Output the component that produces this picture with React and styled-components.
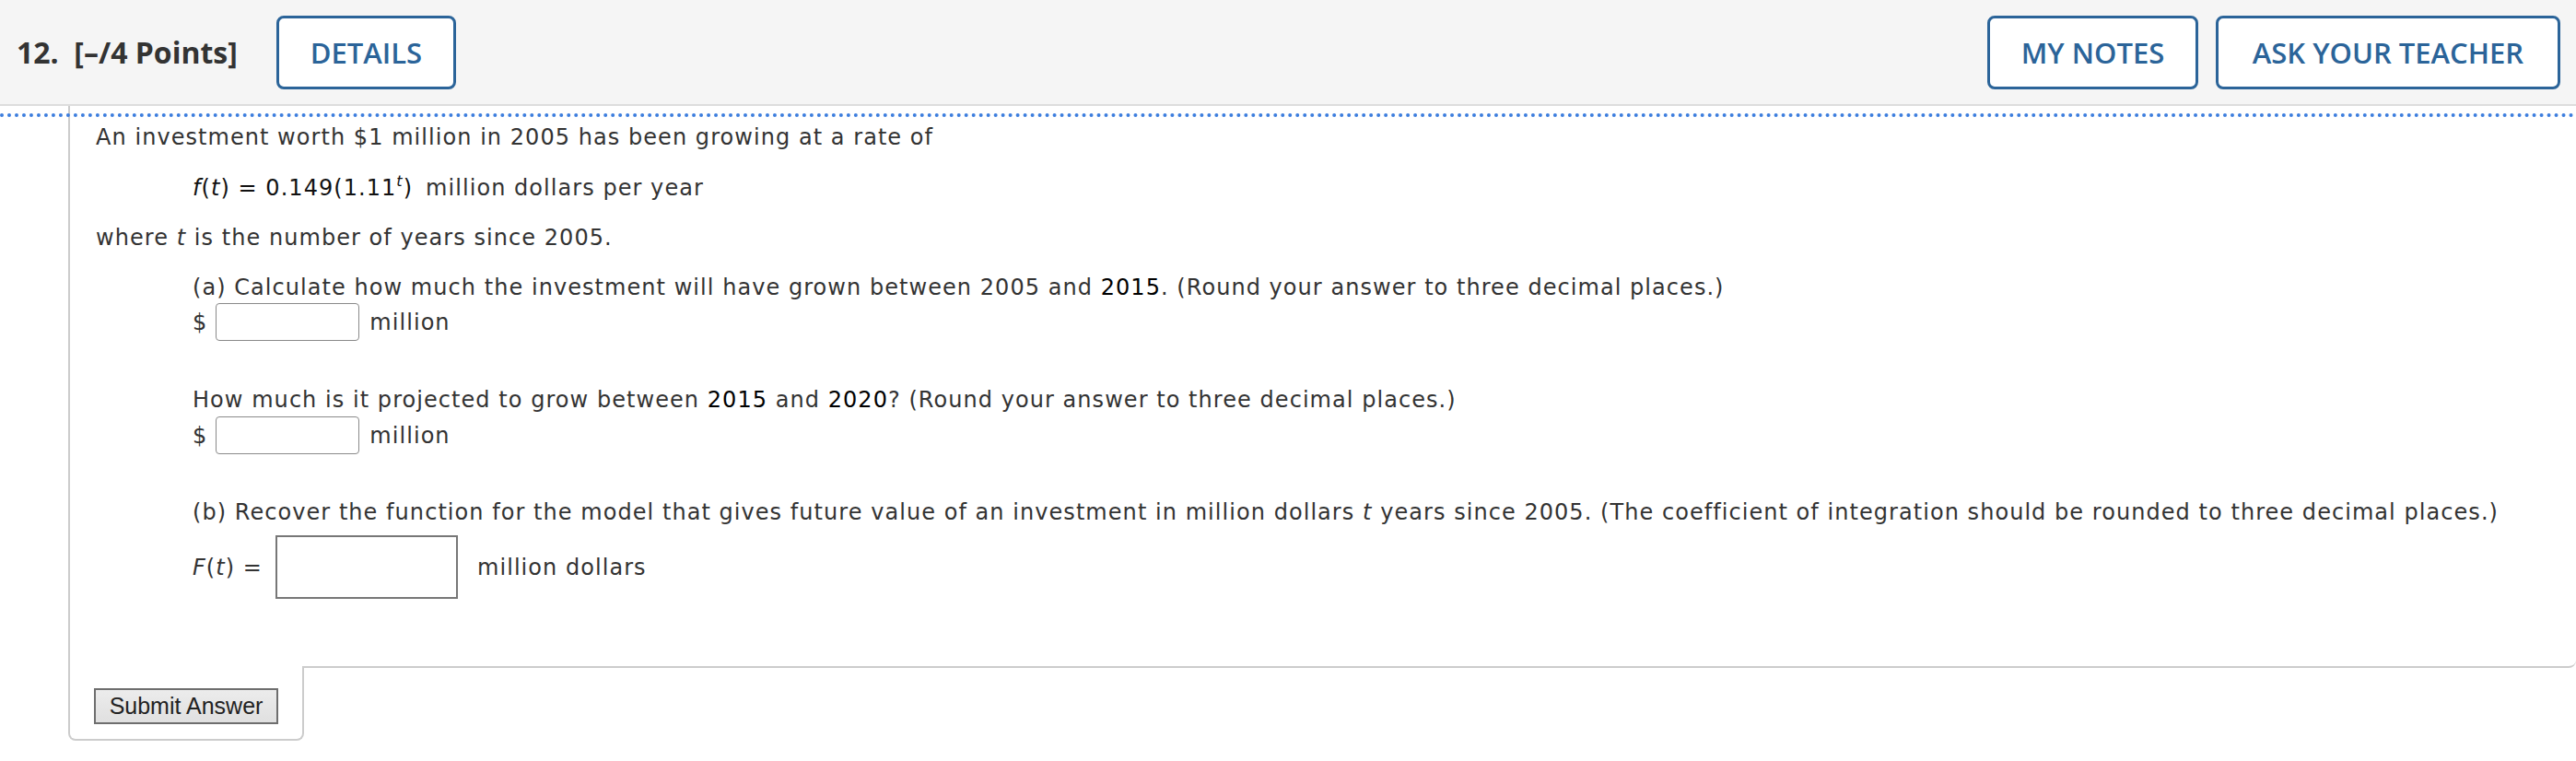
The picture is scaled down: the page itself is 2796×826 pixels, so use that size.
import React from "react";
import styled, { createGlobalStyle } from "styled-components";

const GlobalStyle = createGlobalStyle`
  html, body {
    margin: 0;
    padding: 0;
    background: #fff;
  }
  body {
    font-family: "DejaVu Sans", Verdana, sans-serif;
    color: #333;
  }
`;

const Header = styled.div`
  display: flex;
  align-items: center;
  height: 113px;
  padding: 0 17px 0 18px;
  background: #f5f5f5;
  border-bottom: 2px solid #dddddd;
`;

const Title = styled.div`
  font-family: "Open Sans", sans-serif;
  font-weight: 700;
  font-size: 32px;
  color: #333;
  white-space: pre;
  margin-right: 42px;
`;

const Spacer = styled.div`
  flex: 1;
`;

const HeaderButton = styled.button`
  height: 80px;
  width: ${p => p.$w}px;
  margin-left: ${p => p.$ml || 0}px;
  border: 3px solid #2b6499;
  border-radius: 8px;
  background: #fff;
  color: #2b6499;
  font-family: "Open Sans", sans-serif;
  font-weight: 600;
  font-size: 31px;
  padding: 0;
  cursor: pointer;
`;

const Body = styled.div`
  margin-left: 74px;
`;

const Content = styled.div`
  position: relative;
  border-left: 2px solid #cccccc;
  border-bottom: 2px solid #cccccc;
  border-bottom-right-radius: 8px;
  padding: 20px 0 73px 28px;
  font-size: 24px;
  letter-spacing: 1.05px;
  line-height: 28px;

  &::before {
    content: "";
    position: absolute;
    top: 8px;
    left: -76px;
    right: 0;
    border-top: 4px dotted #3d7ede;
  }
`;

const Line = styled.div`
  margin-top: ${p => p.$mt || 0}px;
  padding-left: ${p => (p.$indent ? 105 : 0)}px;
  white-space: nowrap;
`;

const Row = styled.div`
  display: flex;
  align-items: center;
  margin-top: ${p => p.$mt || 0}px;
  padding-left: 105px;
  white-space: nowrap;
`;

const Math = styled.span`
  color: #111;
  margin-right: 14px;
`;

const I = styled.i`
  font-style: italic;
`;

const Sup = styled.sup`
  font-size: 16px;
  font-style: italic;
  line-height: 0;
  vertical-align: 10px;
`;

const Dark = styled.span`
  color: #000;
`;

const SmallInput = styled.input`
  box-sizing: border-box;
  width: 156px;
  height: 41px;
  margin: 0 11px 0 9px;
  border: 1.5px solid #8a8a8a;
  border-radius: 4px;
  background: #fff;
`;

const BigInput = styled.input`
  box-sizing: border-box;
  width: 198px;
  height: 69px;
  margin: 0 21px 0 14px;
  border: 2px solid #777;
  border-radius: 0;
  background: #fff;
`;

const Footer = styled.div`
  position: relative;
  box-sizing: border-box;
  width: 256px;
  margin-top: -2px;
  padding: 24px 0 16px 26px;
  background: #fff;
  border: 2px solid #cccccc;
  border-top: none;
  border-radius: 0 0 8px 8px;
`;

const SubmitButton = styled.button`
  box-sizing: border-box;
  width: 200px;
  height: 39px;
  padding: 0;
  border: 2px solid #6e6e6e;
  background: linear-gradient(#ececec, #e0e0e0);
  font-family: "Liberation Sans", Arial, sans-serif;
  font-size: 25px;
  color: #222;
`;

export default function App() {
  return (
    <>
      <GlobalStyle />
      <Header>
        <Title>{"12.  [–/4 Points]"}</Title>
        <HeaderButton $w={195}>DETAILS</HeaderButton>
        <Spacer />
        <HeaderButton $w={229}>MY NOTES</HeaderButton>
        <HeaderButton $w={374} $ml={19}>
          ASK YOUR TEACHER
        </HeaderButton>
      </Header>
      <Body>
        <Content>
          <Line>An investment worth $1 million in 2005 has been growing at a rate of</Line>
          <Line $mt={27} $indent>
            <Math>
              <I>f</I>(<I>t</I>) = 0.149(1.11<Sup>t</Sup>)
            </Math>
            million dollars per year
          </Line>
          <Line $mt={26}>
            where <I>t</I> is the number of years since 2005.
          </Line>
          <Line $mt={26} $indent>
            (a) Calculate how much the investment will have grown between 2005 and{" "}
            <Dark>2015</Dark>. (Round your answer to three decimal places.)
          </Line>
          <Row $mt={3}>
            $<SmallInput type="text" />
            million
          </Row>
          <Line $mt={50} $indent>
            How much is it projected to grow between <Dark>2015</Dark> and <Dark>2020</Dark>?
            (Round your answer to three decimal places.)
          </Line>
          <Row $mt={4}>
            $<SmallInput type="text" />
            million
          </Row>
          <Line $mt={49} $indent>
            (b) Recover the function for the model that gives future value of an investment in
            million dollars <I>t</I> years since 2005. (The coefficient of integration should be
            rounded to three decimal places.)
          </Line>
          <Row $mt={11}>
            <span>
              <I>F</I>(<I>t</I>) =
            </span>
            <BigInput type="text" />
            million dollars
          </Row>
        </Content>
        <Footer>
          <SubmitButton>Submit Answer</SubmitButton>
        </Footer>
      </Body>
    </>
  );
}
